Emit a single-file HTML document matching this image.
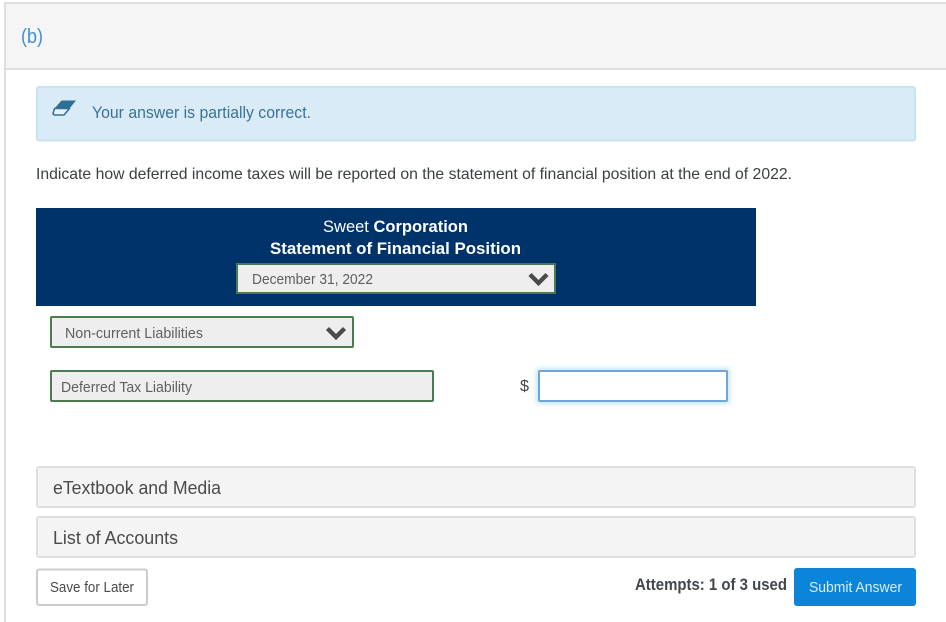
<!DOCTYPE html>
<html lang="en">
<head>
<meta charset="utf-8">
<title>Statement of Financial Position</title>
<style>
html,body{margin:0;padding:0;background:#fff;width:946px;height:622px;overflow:hidden}
svg{display:block;position:absolute;left:0;top:0}
text{font-family:"Liberation Sans",sans-serif}
</style>
</head>
<body>
<svg width="946" height="622" viewBox="0 0 946 622" xmlns="http://www.w3.org/2000/svg">
<defs>
<filter id="glow" x="-10%" y="-30%" width="120%" height="160%"><feGaussianBlur stdDeviation="2.5"/></filter>
</defs>
<rect x="0" y="0" width="946" height="622" fill="#fff"/>
<!-- outer panel -->
<rect x="4" y="2" width="942" height="68" fill="#f5f5f5"/>
<rect x="4" y="2" width="942" height="2" fill="#dedede"/>
<rect x="4" y="68" width="942" height="2" fill="#dedede"/>
<rect x="4" y="2" width="2" height="620" fill="#dedede"/>
<text x="21" y="43" font-size="20" fill="#3f90cf" textLength="22" lengthAdjust="spacingAndGlyphs">(b)</text>

<!-- alert -->
<rect x="37" y="87" width="878" height="53.500" rx="2" fill="#d9ebf6" stroke="#c8e3f0" stroke-width="2"/>
<path d="M61.500 100.500H76L69.500 108.500H54.500Z" fill="#2f6f96"/>
<path d="M54.500 108.500H69.500L64 115H54.500L53 114Z" fill="#e6f1f8" stroke="#2f6f96" stroke-width="1.500" stroke-linejoin="round"/>
<text x="92" y="118" font-size="16.500" fill="#3a7396" textLength="219" lengthAdjust="spacingAndGlyphs">Your answer is partially correct.</text>

<text x="36" y="179" font-size="16" fill="#3a3f44" textLength="756" lengthAdjust="spacingAndGlyphs">Indicate how deferred income taxes will be reported on the statement of financial position at the end of 2022.</text>

<!-- dark band -->
<rect x="36" y="208" width="720" height="98" fill="#00336a"/>
<text x="323" y="232" font-size="16.500" fill="#fff" textLength="145" lengthAdjust="spacingAndGlyphs">Sweet <tspan font-weight="700">Corporation</tspan></text>
<text x="270" y="254" font-size="16.500" font-weight="700" fill="#fff" textLength="251" lengthAdjust="spacingAndGlyphs">Statement of Financial Position</text>
<rect x="237" y="264" width="318" height="29" fill="#eeeeee" stroke="#4a7c4f" stroke-width="2"/>
<text x="252" y="284" font-size="14.500" fill="#5f5f5f" textLength="121" lengthAdjust="spacingAndGlyphs">December 31, 2022</text>
<path d="M530 274.500L538.500 283L547 274.500" fill="none" stroke="#4a4a4a" stroke-width="4.400"/>

<!-- non-current -->
<rect x="51" y="317" width="302" height="30" rx="1" fill="#eeeeee" stroke="#4a7c4f" stroke-width="2"/>
<text x="65" y="338" font-size="14.500" fill="#5f5f5f" textLength="138" lengthAdjust="spacingAndGlyphs">Non-current Liabilities</text>
<path d="M327.500 328.500L336 337L344.500 328.500" fill="none" stroke="#4a4a4a" stroke-width="4.400"/>

<!-- deferred -->
<rect x="51" y="371" width="382" height="30" rx="1" fill="#eeeeee" stroke="#4a7c4f" stroke-width="2"/>
<text x="61" y="392" font-size="14.500" fill="#5f5f5f" textLength="131" lengthAdjust="spacingAndGlyphs">Deferred Tax Liability</text>

<!-- input -->
<text x="520" y="391" font-size="16" fill="#444" textLength="9" lengthAdjust="spacingAndGlyphs">$</text>
<rect x="536" y="368" width="194" height="36" rx="2" fill="#c9e5f7" filter="url(#glow)"/>
<rect x="539" y="371" width="188" height="30" rx="1" fill="#fff" stroke="#6fa6d8" stroke-width="2"/>

<!-- accordions -->
<rect x="37" y="467" width="878" height="40" rx="2" fill="#f4f4f4" stroke="#dedede" stroke-width="2"/>
<text x="53" y="494" font-size="18.500" fill="#4a4a4a" textLength="168" lengthAdjust="spacingAndGlyphs">eTextbook and Media</text>
<rect x="37" y="517" width="878" height="40" rx="2" fill="#f4f4f4" stroke="#dedede" stroke-width="2"/>
<text x="53" y="544" font-size="18.500" fill="#4a4a4a" textLength="125" lengthAdjust="spacingAndGlyphs">List of Accounts</text>

<!-- buttons -->
<rect x="37" y="569.500" width="110" height="35.500" rx="2" fill="#fff" stroke="#cccccc" stroke-width="2"/>
<text x="50" y="592" font-size="14.500" fill="#4a4a4a" textLength="84" lengthAdjust="spacingAndGlyphs">Save for Later</text>
<text x="635" y="590" font-size="16.500" font-weight="700" fill="#41474c" textLength="152" lengthAdjust="spacingAndGlyphs">Attempts: 1 of 3 used</text>
<rect x="794" y="568" width="122" height="38" rx="3" fill="#0a85d9"/>
<text x="809" y="592" font-size="14.500" fill="#d8eefc" textLength="93" lengthAdjust="spacingAndGlyphs">Submit Answer</text>
</svg>
</body>
</html>
